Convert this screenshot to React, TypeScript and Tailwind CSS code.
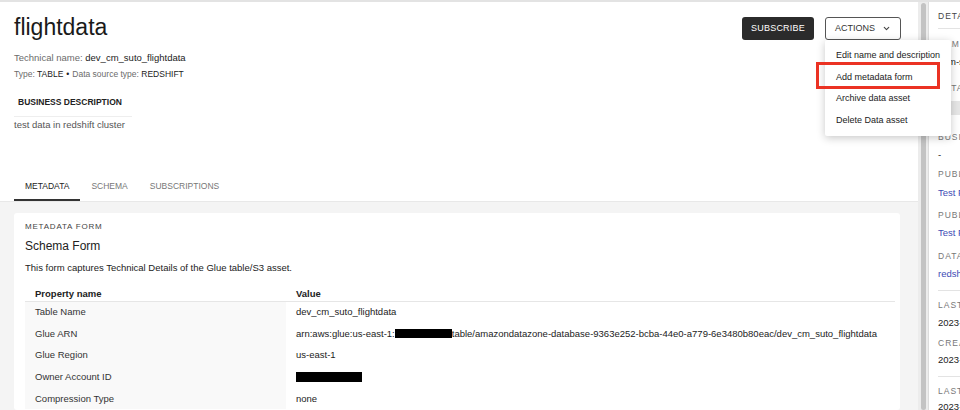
import { ChevronDown } from 'lucide-react';

const rows: { name: string; value: React.ReactNode }[] = [
  { name: 'Table Name', value: 'dev_cm_suto_flightdata' },
  {
    name: 'Glue ARN',
    value: (
      <span className="inline-flex items-center">
        arn:aws:glue:us-east-1:
        <span className="inline-block w-[57px] h-[9px] bg-black" />
        table/amazondatazone-database-9363e252-bcba-44e0-a779-6e3480b80eac/dev_cm_suto_flightdata
      </span>
    ),
  },
  { name: 'Glue Region', value: 'us-east-1' },
  { name: 'Owner Account ID', value: <span className="inline-block w-[66px] h-[10px] bg-black align-middle" /> },
  { name: 'Compression Type', value: 'none' },
];

function Label({ children, className = '' }: { children: React.ReactNode; className?: string }) {
  return <div className={`text-[8.5px] leading-[12px] tracking-[1px] uppercase ${className}`}>{children}</div>;
}

function Value({ children, className = '', link = false }: { children: React.ReactNode; className?: string; link?: boolean }) {
  return <div className={`text-[9.5px] leading-[14px] ${link ? 'text-[#3d4cb5]' : 'text-[#222]'} ${className}`}>{children}</div>;
}

export default function App() {
  const menuItems = ['Edit name and description', 'Add metadata form', 'Archive data asset', 'Delete Data asset'];

  return (
    <div className="relative w-[960px] h-[410px] overflow-hidden bg-white border-t-2 border-[#e3e3e3] flex font-['Liberation_Sans',Arial,sans-serif]">
      {/* main column */}
      <div className="w-[918px] shrink-0 flex flex-col">
        <div className="pl-[14px] pr-[17px] pt-[11px]">
          <div className="flex justify-between items-start">
            <h1 className="text-[23px] leading-[28px] text-[#1a1a1a]">flightdata</h1>
            <div className="flex gap-[11px] mt-[4px]">
              <button className="w-[72px] h-[23px] rounded-[3px] bg-[#2b2b2b] text-white text-[9px] tracking-[0.2px]">SUBSCRIBE</button>
              <button className="w-[76px] h-[23px] rounded-[3px] border border-[#555] text-[#333] text-[9px] flex items-center pl-[9px] gap-[7px]">
                ACTIONS
                <ChevronDown size={9} strokeWidth={3} className="text-[#444]" />
              </button>
            </div>
          </div>
          <div className="mt-[10px] text-[9.5px] leading-[14px]">
            <span className="text-[#6b6b6b]">Technical name: </span>
            <span className="text-[#222]">dev_cm_suto_flightdata</span>
          </div>
          <div className="mt-[3px] text-[8.5px] leading-[12px]">
            <span className="text-[#6b6b6b]">Type: </span>
            <span className="text-[#222]">TABLE</span>
            <span className="text-[#222] mx-[3px]">•</span>
            <span className="text-[#6b6b6b]">Data source type: </span>
            <span className="text-[#222]">REDSHIFT</span>
          </div>
          <div className="mt-[16px] w-[118px] border-b border-[#eeeeee] pb-[8px]">
            <div className="pl-[4px] text-[8.5px] leading-[12px] font-bold text-[#222]">BUSINESS DESCRIPTION</div>
          </div>
          <div className="mt-[1px] text-[9.5px] leading-[14px] text-[#555]">test data in redshift cluster</div>
        </div>

        {/* tabs */}
        <div className="mt-[40px] pl-[14px] flex text-[8.5px] leading-[12px]">
          <div className="px-[11px] pt-[8px] pb-[7px] border-b-2 border-[#333] text-[#222]">METADATA</div>
          <div className="px-[11px] pt-[8px] pb-[7px] border-b-2 border-transparent text-[#777]">SCHEMA</div>
          <div className="px-[11px] pt-[8px] pb-[7px] border-b-2 border-transparent text-[#777]">SUBSCRIPTIONS</div>
        </div>

        <div className="flex-1 bg-[#f4f4f4] border-t border-[#e8e8e8] pt-[11px] pl-[14px] pr-[18px]">
          <div className="bg-white rounded-[3px] h-full pl-[11px] pr-[5px] pt-[9px]">
            <div className="text-[8px] leading-[10px] tracking-[0.8px] text-[#444]">METADATA FORM</div>
            <div className="mt-[6px] text-[12px] leading-[16px] text-[#222]">Schema Form</div>
            <div className="mt-[7px] text-[9.5px] leading-[13px] text-[#222]">This form captures Technical Details of the Glue table/S3 asset.</div>
            <table className="mt-[7px] w-full border-collapse text-[9.5px] text-[#222]">
              <thead>
                <tr className="border-b border-[#e6e6e6]">
                  <th className="w-[261px] text-left font-bold pl-[10px] pt-[7px] pb-[1px] leading-[12px]">Property name</th>
                  <th className="text-left font-bold pl-[10px] pt-[7px] pb-[1px] leading-[12px]">Value</th>
                </tr>
              </thead>
              <tbody>
                {rows.map((r) => (
                  <tr key={r.name} className="h-[21.6px]">
                    <td className="bg-[#f9f9f9] pl-[10px] text-[#333]">{r.name}</td>
                    <td className="pl-[10px] whitespace-nowrap">{r.value}</td>
                  </tr>
                ))}
              </tbody>
            </table>
          </div>
        </div>
      </div>

      {/* scrollbar */}
      <div className="w-[10px] shrink-0 bg-[#ececec] flex justify-center pt-[1px]">
        <div className="w-[5px] h-full rounded-full bg-[#c3c3c3]" />
      </div>

      {/* details panel */}
      <div className="flex-1 border-l border-[#dcdcdc] pl-[9px] overflow-hidden whitespace-nowrap">
        <div className="w-[220px]">
          <div className="pt-[8px] pb-[6px] border-b border-[#e3e3e3]">
            <Label className="text-[#444]">DETAILS</Label>
          </div>
          <Label className="mt-[9px] text-[#777]">NAME</Label>
          <Value className="mt-[5px]">dcm-suto_flightdata</Value>
          <Label className="mt-[13px] text-[#777]">DATA ASSET TYPE</Label>
          <div className="mt-[7px] h-[14px] w-[90px] rounded-full bg-[#e6e6e6]" />
          <Label className="mt-[16px] text-[#777]">BUSINESS NAME</Label>
          <Value className="mt-[5px]">-</Value>
          <Label className="mt-[6px] text-[#777]">PUBLISHING PROJECT</Label>
          <Value className="mt-[6px]" link>Test Project</Value>
          <Label className="mt-[9px] text-[#777]">PUBLISHER</Label>
          <Value className="mt-[5px]" link>Test Project</Value>
          <Label className="mt-[10px] text-[#777]">DATA SOURCE</Label>
          <Value className="mt-[5px]" link>redshift-source</Value>
          <div className="mt-[9px] border-b border-[#e3e3e3]" />
          <Label className="mt-[8px] text-[#777]">LAST UPDATED</Label>
          <Value className="mt-[5px]">2023-11-20</Value>
          <Label className="mt-[7px] text-[#777]">CREATED</Label>
          <Value className="mt-[4px]">2023-11-20</Value>
          <div className="mt-[9px] border-b border-[#e3e3e3]" />
          <Label className="mt-[8px] text-[#777]">LAST RUN</Label>
          <Value className="mt-[3px]">2023-11-20</Value>
        </div>
      </div>

      {/* actions menu */}
      <div className="absolute left-[825px] top-[38px] w-[126px] bg-white rounded-[2px] shadow-[0_2px_8px_rgba(0,0,0,0.22)] py-[5px]">
        {menuItems.map((m) => (
          <div key={m} className="h-[21.6px] flex items-center pl-[11px] text-[9px] text-[#222] whitespace-nowrap">
            {m}
          </div>
        ))}
      </div>
      <div className="absolute left-[816px] top-[60px] w-[124px] h-[27px] border-[3px] border-[#eb3223]" />
    </div>
  );
}
